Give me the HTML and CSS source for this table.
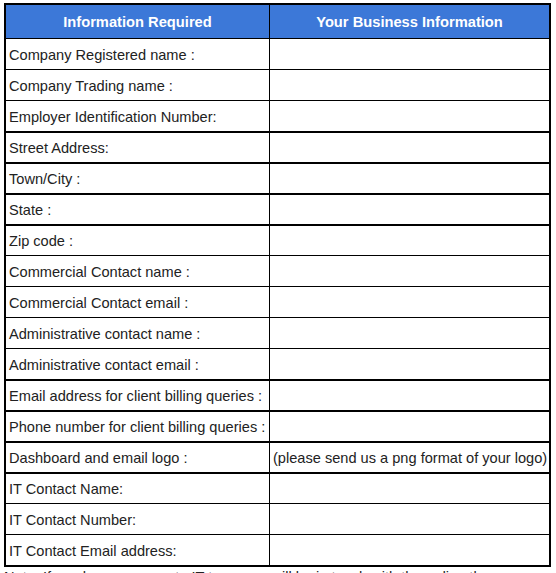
FILE: index.html
```html
<!DOCTYPE html>
<html>
<head>
<meta charset="utf-8">
<link rel="stylesheet" href="styles.css">
</head>
<body>
<table class="info">
  <thead>
    <tr><th class="c1">Information Required</th><th class="c2">Your Business Information</th></tr>
  </thead>
  <tbody>
    <tr><td>Company Registered name :</td><td></td></tr>
    <tr><td>Company Trading name :</td><td></td></tr>
    <tr><td>Employer Identification Number:</td><td></td></tr>
    <tr class="thick"><td>Street Address:</td><td></td></tr>
    <tr class="thick"><td>Town/City :</td><td></td></tr>
    <tr class="thick"><td>State :</td><td></td></tr>
    <tr class="thick"><td>Zip code :</td><td></td></tr>
    <tr><td>Commercial Contact name :</td><td></td></tr>
    <tr><td>Commercial Contact email :</td><td></td></tr>
    <tr><td>Administrative contact name :</td><td></td></tr>
    <tr><td>Administrative contact email :</td><td></td></tr>
    <tr class="thick"><td>Email address for client billing queries :</td><td></td></tr>
    <tr class="thick"><td>Phone number for client billing queries :</td><td></td></tr>
    <tr class="thick"><td>Dashboard and email logo :</td><td>(please send us a png format of your logo)</td></tr>
    <tr class="thick"><td>IT Contact Name:</td><td></td></tr>
    <tr><td>IT Contact Number:</td><td></td></tr>
    <tr><td>IT Contact Email address:</td><td></td></tr>
  </tbody>
</table>
<p class="note">Note: If you have a separate IT team, we will be in touch with them directly.</p>
</body>
</html>
```

FILE: styles.css
```css
html, body {
  margin: 0;
  padding: 0;
  background: #fff;
}
body {
  padding: 3px 0 0 4px;
  font-family: "Liberation Sans", Arial, sans-serif;
  font-size: 14.6px;
  color: #222;
}
.info {
  border-collapse: collapse;
  border: 2px solid #000;
  width: 547px;
  table-layout: fixed;
}
.info th {
  background: #3c78d8;
  color: #fff;
  font-weight: bold;
  font-size: 14.7px;
  height: 32px;
  padding: 1px 0 0 0;
  border: 1px solid #000;
  border-top: 2px solid #000;
  text-align: center;
  vertical-align: middle;
}
.info th.c1 { width: 263px; }
.info td {
  height: 29px;
  padding: 1px 0 0 3px;
  border: 1px solid #000;
  vertical-align: middle;
  white-space: nowrap;
  overflow: hidden;
  line-height: 16px;
}
.info tr.thick td {
  border-top: 2px solid #000;
  height: 28px;
}
.note {
  margin: 2px 0 0 0;
  white-space: nowrap;
  font-size: 14.6px;
}
```
